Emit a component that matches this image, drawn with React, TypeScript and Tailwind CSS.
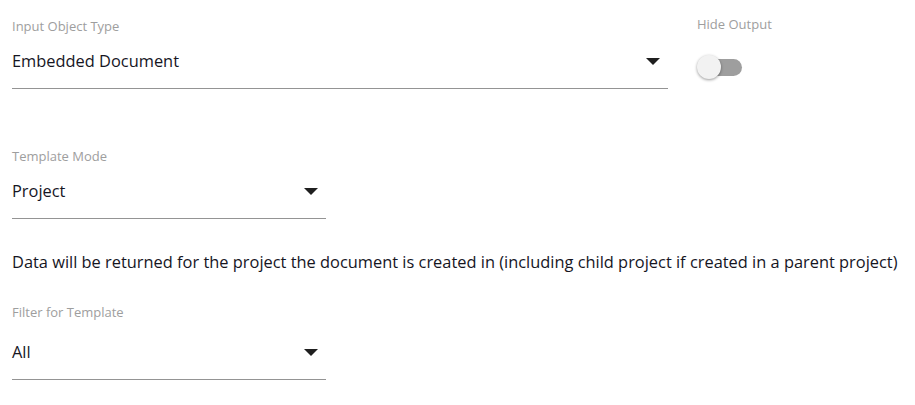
import React from 'react';

function Caret() {
  return (
    <svg className="w-[14px] h-[7px] shrink-0" viewBox="0 0 14 7" fill="#1f1f1f">
      <path d="M0 0h14L7 7z" />
    </svg>
  );
}

function SelectField({ label, value, width, gap }: { label: string; value: string; width: string; gap: string }) {
  return (
    <div className={width}>
      <div className="text-[13px] leading-4 h-4 text-[#9e9e9e]">{label}</div>
      <div className={`flex items-center justify-between pr-2 pb-[15px] border-b border-[#949494] ${gap}`}>
        <span className="text-[16.4px] leading-6 text-[#16161f]">{value}</span>
        <Caret />
      </div>
    </div>
  );
}

export default function App() {
  return (
    <div className="w-[915px] h-[405px] bg-white pl-3 pt-[18px]" style={{ fontFamily: '"Open Sans", "Noto Sans", sans-serif' }}>
      <div className="flex items-start">
        <SelectField label="Input Object Type" value="Embedded Document" width="w-[656px]" gap="mt-[15px]" />
        <div className="ml-[29px] flex flex-col">
          <div className="text-[13px] leading-4 h-4 text-[#9e9e9e] -mt-[2px]">Hide Output</div>
          <div className="relative mt-[23px] w-[46px] h-6 flex items-center">
            <div className="absolute left-[8px] w-[37px] h-[17px] rounded-full bg-[#9e9e9e]" />
            <div className="absolute left-0 w-6 h-6 rounded-full bg-[#f2f2f2] shadow-[0_1px_3px_rgba(0,0,0,0.4)]" />
          </div>
        </div>
      </div>

      <div className="mt-[59px]">
        <SelectField label="Template Mode" value="Project" width="w-[314px]" gap="mt-[15px]" />
      </div>

      <p className="mt-[31px] text-[16.4px] leading-6 text-[#16161f]">
        Data will be returned for the project the document is created in (including child project if created in a parent project)
      </p>

      <div className="mt-[30px]">
        <SelectField label="Filter for Template" value="All" width="w-[314px]" gap="mt-5" />
      </div>
    </div>
  );
}
